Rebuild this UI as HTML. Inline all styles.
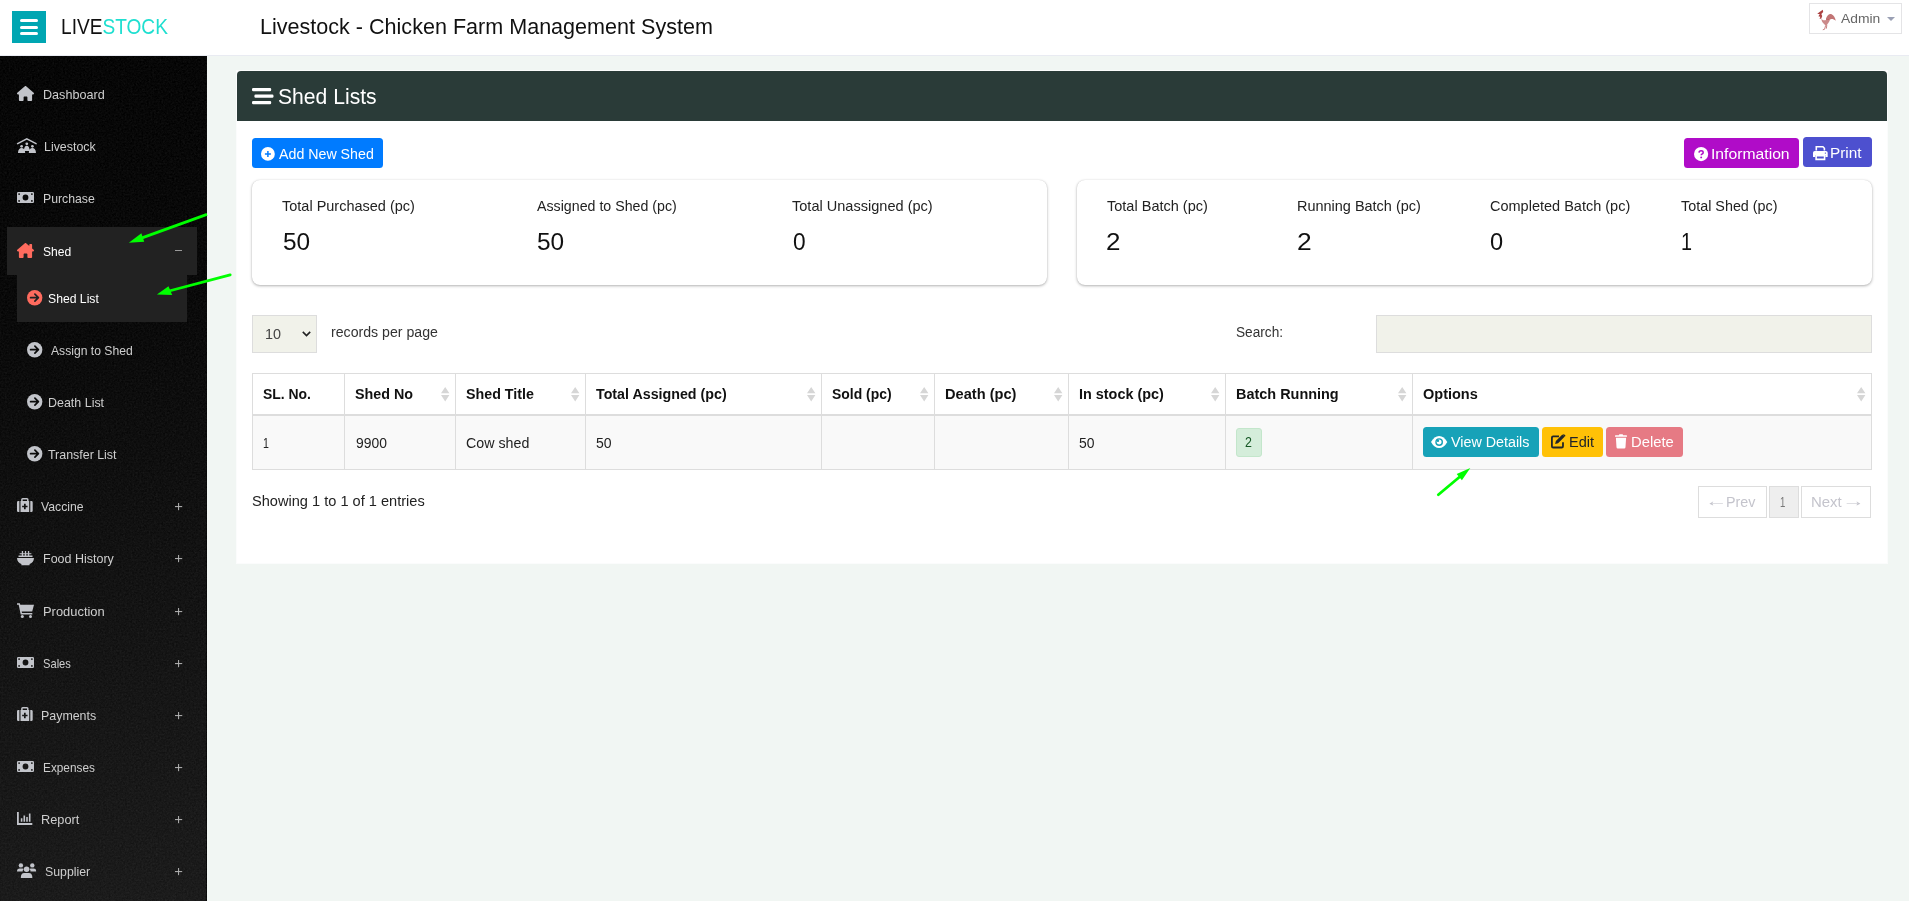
<!DOCTYPE html>
<html lang="en">
<head>
<meta charset="utf-8">
<title>Livestock - Chicken Farm Management System</title>
<style>
*{box-sizing:border-box;margin:0;padding:0}
html,body{width:1909px;height:901px;overflow:hidden}
body{position:relative;background:#f1f6f3;font-family:"Liberation Sans","DejaVu Sans",sans-serif;color:#222;font-size:14px}
.abs{position:absolute}
.t{position:absolute;white-space:nowrap;line-height:1;transform-origin:0 50%}
svg{display:block;position:absolute;overflow:visible}

/* header */
#hdr{left:0;top:0;width:1909px;height:55px;background:#fff}
#hdrline{left:0;top:55px;width:1909px;height:1px;background:#e9ebf2}
#burger{left:12px;top:11px;width:34px;height:32px;background:#00a6b2}
#burger i{position:absolute;left:8px;width:18px;height:3px;border-radius:1.5px;background:#fff}

/* sidebar */
#side{left:0;top:56px;width:207px;height:845px;background:linear-gradient(172deg,#000 0%,#030303 28%,#0d0d0d 62%,#161616 100%);border-right:1px solid #040404}
.mi{position:absolute;left:7px;width:190px;height:48px}
.smi{position:absolute;left:17px;width:170px;height:47px}
.on{background:#222}
.mt{color:#c8c8c8;font-size:13px}
.pm{color:#a5a5a5;font-size:14px}
.ic{fill:#c4c4c4}

/* panel */
#panel{left:237px;top:71px;width:1650px;height:492px;background:#fff;box-shadow:0 0 0 1px rgba(255,255,255,.7)}
#phead{left:237px;top:71px;width:1650px;height:50px;background:#2a3b38;border-radius:4px 4px 0 0}
.btn{position:absolute;border-radius:3.5px;height:30px}
.bt{font-size:14px;color:#fff}
.card{position:absolute;top:180px;width:795px;height:105px;background:#fff;border-radius:8px;box-shadow:0 1px 3px rgba(0,0,0,.30),0 0 1px rgba(0,0,0,.15)}
.lbl{font-size:15px;color:#222}
.val{font-size:24px;color:#111}
.inp{position:absolute;top:315px;height:38px;background:#f1f2ea;border:1px solid #ddd}

/* table */
.vl{position:absolute;width:1px;background:#ddd;top:373px;height:97px}
.hl{position:absolute;left:252px;width:1620px;background:#ddd}
.th{font-weight:bold;font-size:14px;color:#111}
.td{font-size:14px;color:#222}
.pg{position:absolute;top:486px;height:32px;border:1px solid #ddd;background:#fff}
.pgt{font-size:15px;color:#bbb}
</style>
</head>
<body>

<!-- ================= HEADER ================= -->
<div id="hdr" class="abs"></div>
<div id="hdrline" class="abs"></div>
<div id="burger" class="abs"><i style="top:8px"></i><i style="top:14.5px"></i><i style="top:21px"></i></div>

<!-- admin dropdown -->
<div class="abs" id="admin" style="left:1809px;top:3px;width:93px;height:31px;border:1px solid #e4e4e6;background:#fff"></div>
<svg id="rooster" style="left:1816px;top:9px" width="21" height="22" viewBox="0 0 21 22">
  <path d="M6.800 .8L3.200 3.200L1.200 5L3.800 5.100L2.400 7.300L4.300 7.700L3.600 10L5.300 9.600L6.200 7L5.300 5L7.200 3z" fill="#9c1f1f" opacity=".85"/>
  <path d="M10 9.600C11 6.500 13.500 4.300 15.600 5.300C17.700 6.400 19.300 9 19.800 11.800C17.800 10.200 16.200 9.700 14.700 10.200C13.200 10.700 12 11.200 10 11.100z" fill="#a83a3a" opacity=".7"/>
  <path d="M5 9.200C6 11.200 8 11.700 10 11.100L14.200 10.200C13.200 13.200 11.700 15.300 9.700 16.800C8.600 15.700 7 14.200 6 12.600z" fill="#a83a3a" opacity=".6"/>
  <path d="M9.600 16.600L8.600 20.200L6.800 20.800M10.800 15.800L10.400 19.600" fill="none" stroke="#a83a3a" stroke-width=".9" opacity=".7"/>
</svg>
<svg id="caret" style="left:1886.900px;top:17px" width="8" height="4" viewBox="0 0 8 4"><path d="M0 0h8L4 4z" fill="#9aa0b4"/></svg>

<!-- ================= SIDEBAR ================= -->
<div id="side" class="abs"></div>
<svg id="noise" style="left:0;top:56px" width="207" height="845" viewBox="0 0 207 845"><filter id="nz" x="0" y="0" width="100%" height="100%"><feTurbulence type="fractalNoise" baseFrequency="0.55" numOctaves="3" seed="7"/><feColorMatrix type="matrix" values="0 0 0 0 1  0 0 0 0 1  0 0 0 0 1  0.6 0.6 0.6 0 -0.62"/></filter><rect width="207" height="845" filter="url(#nz)" opacity=".09"/></svg>
<div class="mi on" style="top:227px"></div>
<div class="smi on" style="top:275px"></div>
<svg id="i_home" style="left:17px;top:85.8px" width="17" height="15.1" viewBox="0 0 576 512"><path d="M575.8 255.5c0 18-15 32.1-32 32.1h-32l.7 160.2c0 2.7-.2 5.4-.5 8.1V472c0 22.1-17.9 40-40 40H456c-1.1 0-2.2 0-3.3-.1c-1.4 .1-2.8 .1-4.2 .1H416 392c-22.1 0-40-17.9-40-40V448 384c0-17.7-14.3-32-32-32H256c-17.7 0-32 14.3-32 32v64 24c0 22.1-17.9 40-40 40H160 128.1c-1.5 0-3-.1-4.5-.2c-1.2 .1-2.4 .2-3.6 .2H104c-22.1 0-40-17.9-40-40V360c0-.9 0-1.9 .1-2.8V287.6H32c-18 0-32-14-32-32.1c0-9 3-17 10-24L266.4 8c7-7 15-8 22-8s15 2 21 7L564.8 231.5c8 7 12 15 11 24z" fill="#c2c4ca"/></svg>
<svg id="i_live" style="left:16.500px;top:138px" width="19.700" height="15.300" viewBox="0 0 19.700 15.300"><path d="M.6 5.600L9.800 .9l9.300 4.700" fill="none" stroke="#c2c4ca" stroke-width="1.500" stroke-linecap="round" stroke-linejoin="miter"/>
<circle cx="4.600" cy="8.300" r="1.350" fill="#c2c4ca"/><circle cx="9.800" cy="5.800" r="1.400" fill="#c2c4ca"/><circle cx="15.400" cy="8.300" r="1.350" fill="#c2c4ca"/>
<path d="M1 15C1 11.500 2.600 10 4.600 10C6.600 10 8.200 11.500 8.200 15zM6.900 13C6.900 9.500 8.200 7.700 9.800 7.700C11.400 7.700 12.700 9.500 12.700 13zM11.800 15C11.800 11.500 13.400 10 15.400 10C17.400 10 19 11.500 19 15z" fill="#c2c4ca"/></svg>
<svg id="i_purchase" style="left:17px;top:192px" width="17" height="11" viewBox="0 0 17 11"><path fill-rule="evenodd" fill="#c2c4ca" d="M1.200 0h14.600q1.200 0 1.200 1.200v8.600q0 1.200-1.200 1.200H1.200Q0 11 0 9.800V1.200Q0 0 1.200 0zM8.500 2.600a2.900 2.900 0 1 0 0 5.800a2.900 2.900 0 1 0 0-5.800zM2.100 1.200a.9 .9 0 1 0 0 1.800a.9 .9 0 1 0 0-1.800zM14.900 1.200a.9 .9 0 1 0 0 1.800a.9 .9 0 1 0 0-1.800zM2.100 8a.9 .9 0 1 0 0 1.800a.9 .9 0 1 0 0-1.800zM14.900 8a.9 .9 0 1 0 0 1.800a.9 .9 0 1 0 0-1.800z"/></svg>
<svg id="i_shed" style="left:17px;top:243px" width="17" height="15.1" viewBox="0 0 576 512"><path d="M543.8 287.6c17 0 32-14 32-32.1c1-9-3-17-11-24L512 185V64c0-17.7-14.3-32-32-32H448c-17.7 0-32 14.3-32 32v36.7L309.5 7c-6-5-14-7-21-7s-15 1-22 8L10 231.5c-7 7-10 15-10 24c0 18 14 32.1 32 32.1h32v69.7c-.1 .9-.1 1.8-.1 2.8V472c0 22.1 17.9 40 40 40h16c1.2 0 2.4-.1 3.6-.2c1.500 .1 3 .2 4.5 .2H160h24c22.1 0 40-17.9 40-40V448 384c0-17.7 14.300-32 32-32h64c17.700 0 32 14.300 32 32v64 24c0 22.1 17.900 40 40 40h24 32.500c1.400 0 2.800 0 4.200-.1c1.100 .1 2.200 .1 3.300 .1h16c22.100 0 40-17.900 40-40V455.800c.3-2.600 .5-5.300 .5-8.100l-.7-160.200h32z" fill="#ff6b5e"/></svg>
<svg id="i_s1" style="left:27.1px;top:289.6px" width="15.4" height="15.4" viewBox="0 0 15.4 15.4"><circle cx="7.7" cy="7.7" r="7.700" fill="#ff6b5e"/><path d="M3.6 7.7h7.200M7.9 4.2l3.500 3.500l-3.500 3.500" fill="none" stroke="#222" stroke-width="1.7" stroke-linecap="round" stroke-linejoin="round"/></svg>
<svg id="i_s2" style="left:27.1px;top:341.6px" width="15.4" height="15.4" viewBox="0 0 15.4 15.4"><circle cx="7.7" cy="7.7" r="7.700" fill="#c2c4ca"/><path d="M3.6 7.7h7.200M7.9 4.2l3.500 3.500l-3.500 3.500" fill="none" stroke="#0b0b0b" stroke-width="1.7" stroke-linecap="round" stroke-linejoin="round"/></svg>
<svg id="i_s3" style="left:27.1px;top:393.7px" width="15.4" height="15.4" viewBox="0 0 15.4 15.4"><circle cx="7.7" cy="7.7" r="7.700" fill="#c2c4ca"/><path d="M3.6 7.7h7.200M7.9 4.2l3.500 3.500l-3.500 3.500" fill="none" stroke="#0b0b0b" stroke-width="1.7" stroke-linecap="round" stroke-linejoin="round"/></svg>
<svg id="i_s4" style="left:27.1px;top:445.6px" width="15.4" height="15.4" viewBox="0 0 15.4 15.4"><circle cx="7.7" cy="7.7" r="7.700" fill="#c2c4ca"/><path d="M3.6 7.7h7.200M7.9 4.2l3.500 3.500l-3.500 3.500" fill="none" stroke="#0b0b0b" stroke-width="1.7" stroke-linecap="round" stroke-linejoin="round"/></svg>
<svg id="i_vaccine" style="left:16.7px;top:498px" width="15.7" height="14" viewBox="0 0 15.7 14"><path d="M4.900 3.200V1.600q0-.8.800-.8h4.300q.8 0 .8.800v1.600" fill="none" stroke="#c2c4ca" stroke-width="1.500"/>
<path fill-rule="evenodd" fill="#c2c4ca" d="M1.300 3h1.100v11H1.300Q0 14 0 12.700V4.300Q0 3 1.300 3zM3.500 3h8.700v11H3.500zM7 5.800v1.850H5.150v1.700H7V11.200h1.700V9.350h1.850v-1.700H8.700V5.800zM13.300 3h1.100q1.300 0 1.300 1.300v8.400q0 1.300-1.300 1.300h-1.100z"/></svg>
<svg id="i_food" style="left:17px;top:551px" width="17" height="14.2" viewBox="0 0 17 14.2"><path d="M0 7H17C17 10.300 14.800 12.400 12.600 13.100V14.200H4.400V13.100C2.200 12.400 0 10.300 0 7z" fill="#c2c4ca"/>
<path d="M1.500 4.400h14v1.500h-14zM4.800 0h1.300v6h-1.300zM7.850 0h1.300v6h-1.300zM10.900 0h1.300v6h-1.300zM2.600 2.200h11.800v1.100H2.600z" fill="#c2c4ca"/></svg>
<svg id="i_prod" style="left:17px;top:603px" width="17" height="15" viewBox="0 0 17 15"><path d="M0 .3h2.800l.5 1.500H17l-1.800 6.700H4.700l.3 1.500h10.300v1.500H3.700L1.700 1.800H0z" fill="#c2c4ca"/><circle cx="5.300" cy="13.500" r="1.500" fill="#c2c4ca"/><circle cx="13.500" cy="13.500" r="1.500" fill="#c2c4ca"/></svg>
<svg id="i_sales" style="left:17px;top:657px" width="17" height="11" viewBox="0 0 17 11"><path fill-rule="evenodd" fill="#c2c4ca" d="M1.200 0h14.600q1.200 0 1.200 1.200v8.600q0 1.200-1.200 1.200H1.200Q0 11 0 9.800V1.200Q0 0 1.200 0zM8.500 2.600a2.900 2.900 0 1 0 0 5.800a2.900 2.900 0 1 0 0-5.800zM2.100 1.200a.9 .9 0 1 0 0 1.800a.9 .9 0 1 0 0-1.800zM14.900 1.200a.9 .9 0 1 0 0 1.800a.9 .9 0 1 0 0-1.800zM2.100 8a.9 .9 0 1 0 0 1.800a.9 .9 0 1 0 0-1.800zM14.900 8a.9 .9 0 1 0 0 1.800a.9 .9 0 1 0 0-1.800z"/></svg>
<svg id="i_pay" style="left:16.7px;top:707px" width="15.7" height="14" viewBox="0 0 15.7 14"><path d="M4.900 3.200V1.600q0-.8.800-.8h4.300q.8 0 .8.800v1.600" fill="none" stroke="#c2c4ca" stroke-width="1.500"/>
<path fill-rule="evenodd" fill="#c2c4ca" d="M1.300 3h1.100v11H1.300Q0 14 0 12.700V4.300Q0 3 1.300 3zM3.500 3h8.700v11H3.500zM7 5.800v1.850H5.150v1.700H7V11.200h1.700V9.350h1.850v-1.700H8.700V5.800zM13.300 3h1.100q1.300 0 1.300 1.300v8.400q0 1.300-1.300 1.300h-1.100z"/></svg>
<svg id="i_exp" style="left:17px;top:761px" width="17" height="11" viewBox="0 0 17 11"><path fill-rule="evenodd" fill="#c2c4ca" d="M1.200 0h14.600q1.200 0 1.200 1.200v8.600q0 1.200-1.200 1.200H1.200Q0 11 0 9.800V1.200Q0 0 1.200 0zM8.500 2.600a2.900 2.900 0 1 0 0 5.800a2.900 2.900 0 1 0 0-5.800zM2.100 1.200a.9 .9 0 1 0 0 1.800a.9 .9 0 1 0 0-1.800zM14.900 1.200a.9 .9 0 1 0 0 1.800a.9 .9 0 1 0 0-1.800zM2.100 8a.9 .9 0 1 0 0 1.800a.9 .9 0 1 0 0-1.800zM14.900 8a.9 .9 0 1 0 0 1.800a.9 .9 0 1 0 0-1.800z"/></svg>
<svg id="i_report" style="left:16.7px;top:811.9px" width="15.3" height="12.9" viewBox="0 0 15.3 12.9"><path d="M0 0h1.800v11.100h13.500v1.800H0z" fill="#c2c4ca"/><path d="M3.800 6.200h1.600v3.600H3.800zM6.500 3.400h1.600v6.400H6.500zM9.200 5h1.600v4.800H9.200zM11.900 1.600h1.600v8.200h-1.600z" fill="#c2c4ca"/></svg>
<svg id="i_sup" style="left:17px;top:862.8px" width="19.2" height="15.1" viewBox="0 0 19.2 15.1"><circle cx="3.900" cy="2.400" r="2.200" fill="#c2c4ca"/><circle cx="15.300" cy="2.400" r="2.200" fill="#c2c4ca"/><circle cx="9.600" cy="6.200" r="2.800" fill="#c2c4ca"/>
<path d="M0 8.400Q0 5.600 2.600 5.600H5.600Q6.300 5.600 6.600 6Q5.500 7.200 5.700 8.400zM19.200 8.400Q19.200 5.600 16.600 5.600H13.600Q12.900 5.600 12.600 6Q13.700 7.200 13.500 8.400z" fill="#c2c4ca"/>
<path d="M3.800 15.100Q3.800 10 7.300 10h4.600Q15.400 10 15.400 15.100z" fill="#c2c4ca"/></svg>
<svg id="pl0" style="left:175px;top:503.0px" width="7.200" height="7.200" viewBox="0 0 7.200 7.200"><path d="M3.600 0v7.200M0 3.600h7.200" stroke="#b8b8b8" stroke-width="1" fill="none"/></svg>
<svg id="pl1" style="left:175px;top:555.4px" width="7.200" height="7.200" viewBox="0 0 7.200 7.200"><path d="M3.600 0v7.200M0 3.600h7.200" stroke="#b8b8b8" stroke-width="1" fill="none"/></svg>
<svg id="pl2" style="left:175px;top:608.1px" width="7.200" height="7.200" viewBox="0 0 7.200 7.200"><path d="M3.600 0v7.200M0 3.600h7.200" stroke="#b8b8b8" stroke-width="1" fill="none"/></svg>
<svg id="pl3" style="left:175px;top:660.4px" width="7.200" height="7.200" viewBox="0 0 7.200 7.200"><path d="M3.600 0v7.200M0 3.600h7.200" stroke="#b8b8b8" stroke-width="1" fill="none"/></svg>
<svg id="pl4" style="left:175px;top:712.2px" width="7.200" height="7.200" viewBox="0 0 7.200 7.200"><path d="M3.600 0v7.200M0 3.600h7.200" stroke="#b8b8b8" stroke-width="1" fill="none"/></svg>
<svg id="pl5" style="left:175px;top:764.1px" width="7.200" height="7.200" viewBox="0 0 7.200 7.200"><path d="M3.600 0v7.200M0 3.600h7.200" stroke="#b8b8b8" stroke-width="1" fill="none"/></svg>
<svg id="pl6" style="left:175px;top:815.8px" width="7.200" height="7.200" viewBox="0 0 7.200 7.200"><path d="M3.600 0v7.200M0 3.600h7.200" stroke="#b8b8b8" stroke-width="1" fill="none"/></svg>
<svg id="pl7" style="left:175px;top:868.0px" width="7.200" height="7.200" viewBox="0 0 7.200 7.200"><path d="M3.600 0v7.200M0 3.600h7.200" stroke="#b8b8b8" stroke-width="1" fill="none"/></svg>
<div class="abs" id="minus" style="left:175px;top:249.8px;width:7.200px;height:1.4px;background:#9a9a9a"></div>
<svg id="arrows" style="left:0;top:0" width="1909" height="901" viewBox="0 0 1909 901">
<path d="M207 214.400L142 237.900" stroke="#00ff00" stroke-width="2.800" fill="none"/><path d="M128.800 242.800L141.400 233.300L144.200 241.800z" fill="#00ff00"/>
<path d="M230.200 274.900L169 291" stroke="#00ff00" stroke-width="2.800" fill="none" stroke-linecap="round"/><path d="M156.900 294.500L168.500 286.300L172.200 295.100z" fill="#00ff00"/>
</svg>

<!-- ================= PANEL ================= -->
<div id="panel" class="abs"></div>
<div id="phead" class="abs"></div>
<svg id="i_stream" style="left:251.600px;top:87.900px" width="21.500" height="16.400" viewBox="0 0 21.500 16.400">
  <rect x="0" y="0" width="19.200" height="3.200" rx="1.200" fill="#fff"/>
  <rect x="2.400" y="6.500" width="19.100" height="3.200" rx="1.200" fill="#fff"/>
  <rect x="0" y="13.100" width="19.200" height="3.200" rx="1.200" fill="#fff"/>
</svg>

<!-- buttons row -->
<div class="btn" id="btn_add" style="left:252px;top:138px;width:131px;background:#007bff"></div>
<svg id="i_plus" style="left:261.100px;top:146.800px" width="13.800" height="13.800" viewBox="0 0 13.800 13.800">
  <circle cx="6.900" cy="6.900" r="6.900" fill="#fff"/><path d="M6.900 3.900v6M3.900 6.900h6" stroke="#007bff" stroke-width="1.500" fill="none"/>
</svg>
<div class="btn" id="btn_info" style="left:1684px;top:138px;width:115px;background:#b00cc8"></div>
<svg id="i_q" style="left:1693.700px;top:146.700px" width="14.200" height="14.200" viewBox="0 0 14.200 14.200">
  <circle cx="7.100" cy="7.100" r="7.100" fill="#fff"/>
  <path d="M5 5.600Q5.100 3.700 7.100 3.700Q9.200 3.700 9.200 5.400Q9.200 6.500 7.900 7.100Q7.200 7.500 7.200 8.300" stroke="#b00cc8" stroke-width="1.500" fill="none"/><circle cx="7.200" cy="10.400" r=".95" fill="#b00cc8"/>
</svg>
<div class="btn" id="btn_print" style="left:1803px;top:137px;width:69px;background:#4d50cf"></div>
<svg id="i_print" style="left:1813px;top:146px" width="14.700" height="14.200" viewBox="0 0 14.700 14.200">
  <path d="M3.300 4.600V.8h6.600l1.500 1.500v2.300" fill="none" stroke="#fff" stroke-width="1.600"/>
  <path d="M1.800 5h11.100q1.800 0 1.800 1.800v4.100h-2.300V9H2.300v1.900H0V6.800Q0 5 1.800 5z" fill="#fff"/>
  <path d="M3.100 9.800h8.500v3.600H3.100z" fill="none" stroke="#fff" stroke-width="1.600"/>
  <circle cx="12.400" cy="7.100" r=".7" fill="#4d50cf"/>
</svg>

<!-- stat cards -->
<div class="card" id="card1" style="left:252px"></div>
<div class="card" id="card2" style="left:1077px"></div>

<!-- length + search -->
<div class="inp" id="sel" style="left:252px;width:65px"></div>
<svg id="i_chev" style="left:301.800px;top:331px" width="9" height="6" viewBox="0 0 9 6"><path d="M.8 .9l3.700 3.700L8.200 .9" fill="none" stroke="#222" stroke-width="1.600"/></svg>
<div class="inp" id="srch" style="left:1376px;width:496px"></div>

<!-- ================= TABLE ================= -->
<div class="abs" id="rowbg" style="left:252px;top:416px;width:1620px;height:53px;background:#f9f9f9"></div>
<div class="hl" style="top:373px;height:1px"></div>
<div class="hl" style="top:414px;height:2px"></div>
<div class="hl" style="top:469px;height:1px"></div>
<div class="vl" style="left:252px"></div>
<div class="vl" style="left:344px"></div>
<div class="vl" style="left:455px"></div>
<div class="vl" style="left:585px"></div>
<div class="vl" style="left:821px"></div>
<div class="vl" style="left:934px"></div>
<div class="vl" style="left:1068px"></div>
<div class="vl" style="left:1225px"></div>
<div class="vl" style="left:1412px"></div>
<div class="vl" style="left:1871px"></div>
<svg id="so0" style="left:441.2px;top:386.600px" width="8.400" height="14.400" viewBox="0 0 8.400 14.400"><path d="M4.200 0L8.400 6.300H0zM0 8.100h8.400L4.200 14.400z" fill="#d6d6d6"/></svg>
<svg id="so1" style="left:571.0px;top:386.600px" width="8.400" height="14.400" viewBox="0 0 8.400 14.400"><path d="M4.200 0L8.400 6.300H0zM0 8.100h8.400L4.200 14.400z" fill="#d6d6d6"/></svg>
<svg id="so2" style="left:807.1px;top:386.600px" width="8.400" height="14.400" viewBox="0 0 8.400 14.400"><path d="M4.200 0L8.400 6.300H0zM0 8.100h8.400L4.200 14.400z" fill="#d6d6d6"/></svg>
<svg id="so3" style="left:920.2px;top:386.600px" width="8.400" height="14.400" viewBox="0 0 8.400 14.400"><path d="M4.200 0L8.400 6.300H0zM0 8.100h8.400L4.200 14.400z" fill="#d6d6d6"/></svg>
<svg id="so4" style="left:1054.3px;top:386.600px" width="8.400" height="14.400" viewBox="0 0 8.400 14.400"><path d="M4.200 0L8.400 6.300H0zM0 8.100h8.400L4.200 14.400z" fill="#d6d6d6"/></svg>
<svg id="so5" style="left:1211.0px;top:386.600px" width="8.400" height="14.400" viewBox="0 0 8.400 14.400"><path d="M4.200 0L8.400 6.300H0zM0 8.100h8.400L4.200 14.400z" fill="#d6d6d6"/></svg>
<svg id="so6" style="left:1398.2px;top:386.600px" width="8.400" height="14.400" viewBox="0 0 8.400 14.400"><path d="M4.200 0L8.400 6.300H0zM0 8.100h8.400L4.200 14.400z" fill="#d6d6d6"/></svg>
<svg id="so7" style="left:1857.2px;top:386.600px" width="8.400" height="14.400" viewBox="0 0 8.400 14.400"><path d="M4.200 0L8.400 6.300H0zM0 8.100h8.400L4.200 14.400z" fill="#d6d6d6"/></svg>
<div class="abs" id="badge" style="left:1236px;top:427.500px;width:26px;height:29.500px;background:#d4edda;border:1px solid #c3e6cb;border-radius:3px"></div>
<div class="btn" id="btn_view" style="left:1423px;top:427px;width:116px;background:#17a2b8"></div>
<svg id="i_eye" style="left:1431.400px;top:436.200px" width="16.300" height="12.100" viewBox="0 0 16.300 12.100">
  <path d="M0 6.050Q3.300 0 8.150 0Q13 0 16.300 6.050Q13 12.100 8.150 12.100Q3.300 12.100 0 6.050z" fill="#fff"/>
  <circle cx="8.150" cy="6.050" r="3.900" fill="#17a2b8"/><circle cx="8.150" cy="6.050" r="2.500" fill="#fff"/><circle cx="6.900" cy="4.800" r="1.300" fill="#17a2b8"/>
</svg>
<div class="btn" id="btn_edit" style="left:1542px;top:427px;width:61px;background:#ffc107"></div>
<svg id="i_edit" style="left:1551.400px;top:434.400px" width="14.200" height="14.400" viewBox="0 0 14.200 14.400">
  <path d="M8 2.400H2.200Q.9 2.400 .9 3.700v8.500q0 1.300 1.300 1.300h8.500q1.300 0 1.300-1.300V8.200" fill="none" stroke="#212529" stroke-width="1.800"/>
  <path d="M4.900 7.100L11.400 .6l2.200 2.200-6.500 6.500-3 .8z" fill="#212529"/><path d="M12.300 .4q.5-.5 1 0l.9.900q.5.500 0 1l-.5.500-1.900-1.900z" fill="#212529"/>
</svg>
<div class="btn" id="btn_del" style="left:1606px;top:427px;width:77px;background:#e67a84"></div>
<svg id="i_trash" style="left:1615.300px;top:434.400px" width="12" height="14.400" viewBox="0 0 12 14.400">
  <path d="M.5 1.200h3.300L4.400 .2h3.200l.6 1h3.300q.5 0 .5.500v1.100H0V1.700q0-.5.500-.5zM.9 3.800h10.200l-.6 9.400q-.1 1.200-1.300 1.200H2.800q-1.200 0-1.300-1.200z" fill="#fff"/>
</svg>
<div class="pg" id="pg_prev" style="left:1698px;width:69px"></div>
<div class="pg" id="pg_1" style="left:1769px;width:30px;background:#eee"></div>
<div class="pg" id="pg_next" style="left:1801px;width:70px"></div>
<svg id="arrow3" style="left:1430px;top:460px" width="50" height="45" viewBox="1430 460 50 45">
<path d="M1438.300 494.700L1459.500 477" stroke="#00ff00" stroke-width="2.800" fill="none" stroke-linecap="round"/><path d="M1470.300 467.900L1456.700 473.900L1461.900 480.300z" fill="#00ff00"/>
</svg>

<!-- ================= TEXT ================= -->
<div class="t" id="logo" style="left:60.71px;top:17.00px;font-size:21.5px;color:#111;transform:scaleX(0.8887)">LIVE<span style="color:#1fdfd0">STOCK</span></div>
<div class="t" id="title" style="left:260.32px;top:16.00px;font-size:22px;color:#111;transform:scaleX(0.9799)">Livestock - Chicken Farm Management System</div>
<div class="t" id="admintxt" style="left:1841.40px;top:12.00px;font-size:13.5px;color:#666;transform:scaleX(1.0276)">Admin</div>
<div class="t" id="ptitle" style="left:277.84px;top:86.00px;font-size:22px;color:#fff;transform:scaleX(0.9604)">Shed Lists</div>
<div class="t" id="b_add" style="left:279.30px;top:147.00px;font-size:14px;color:#fff;transform:scaleX(1.0150)">Add New Shed</div>
<div class="t" id="b_info" style="left:1710.78px;top:147.00px;font-size:14px;color:#fff;transform:scaleX(1.1224)">Information</div>
<div class="t" id="b_print" style="left:1830.00px;top:146.00px;font-size:14px;color:#fff;transform:scaleX(1.0969)">Print</div>
<div class="t" id="l1" style="left:282.20px;top:199.00px;font-size:14.3px;color:#222;transform:scaleX(1.0134)">Total Purchased (pc)</div>
<div class="t" id="l2" style="left:537.20px;top:199.00px;font-size:14.3px;color:#222;transform:scaleX(0.9935)">Assigned to Shed (pc)</div>
<div class="t" id="l3" style="left:792.00px;top:199.00px;font-size:14.3px;color:#222;transform:scaleX(1.0174)">Total Unassigned (pc)</div>
<div class="t" id="l4" style="left:1107.30px;top:199.00px;font-size:14.3px;color:#222;transform:scaleX(1.0156)">Total Batch (pc)</div>
<div class="t" id="l5" style="left:1297.39px;top:199.00px;font-size:14.3px;color:#222;transform:scaleX(1.0114)">Running Batch (pc)</div>
<div class="t" id="l6" style="left:1489.70px;top:199.00px;font-size:14.3px;color:#222;transform:scaleX(1.0145)">Completed Batch (pc)</div>
<div class="t" id="l7" style="left:1681.00px;top:199.00px;font-size:14.3px;color:#222;transform:scaleX(1.0043)">Total Shed (pc)</div>
<div class="t" id="v1" style="left:282.50px;top:230.00px;font-size:24px;color:#111;transform:scaleX(1.0172)">50</div>
<div class="t" id="v2" style="left:537.40px;top:230.00px;font-size:24px;color:#111;transform:scaleX(1.0172)">50</div>
<div class="t" id="v3" style="left:792.90px;top:230.00px;font-size:24px;color:#111;transform:scaleX(0.9462)">0</div>
<div class="t" id="v4" style="left:1106.12px;top:230.00px;font-size:24px;color:#111;transform:scaleX(1.0833)">2</div>
<div class="t" id="v5" style="left:1297.30px;top:230.00px;font-size:24px;color:#111;transform:scaleX(1.1000)">2</div>
<div class="t" id="v6" style="left:1489.90px;top:230.00px;font-size:24px;color:#111;transform:scaleX(0.9846)">0</div>
<div class="t" id="v7" style="left:1681.47px;top:230.00px;font-size:24px;color:#111;transform:scaleX(0.8250)">1</div>
<div class="t" id="sel10" style="left:264.97px;top:327.00px;font-size:14px;color:#444;transform:scaleX(1.0280)">10</div>
<div class="t" id="rpp" style="left:330.90px;top:325.00px;font-size:14px;color:#333;transform:scaleX(1.0099)">records per page</div>
<div class="t" id="search" style="left:1236.00px;top:325.00px;font-size:14px;color:#333;transform:scaleX(0.9755)">Search:</div>
<div class="t" id="h1" style="left:262.90px;top:387.00px;font-size:14px;color:#111;transform:scaleX(0.9951);font-weight:bold">SL. No.</div>
<div class="t" id="h2" style="left:355.40px;top:387.00px;font-size:14px;color:#111;transform:scaleX(1.0226);font-weight:bold">Shed No</div>
<div class="t" id="h3" style="left:466.10px;top:387.00px;font-size:14px;color:#111;transform:scaleX(1.0186);font-weight:bold">Shed Title</div>
<div class="t" id="h4" style="left:596.20px;top:387.00px;font-size:14px;color:#111;transform:scaleX(1.0180);font-weight:bold">Total Assigned (pc)</div>
<div class="t" id="h5" style="left:832.00px;top:387.00px;font-size:14px;color:#111;transform:scaleX(0.9946);font-weight:bold">Sold (pc)</div>
<div class="t" id="h6" style="left:945.40px;top:387.00px;font-size:14px;color:#111;transform:scaleX(1.0430);font-weight:bold">Death (pc)</div>
<div class="t" id="h7" style="left:1079.30px;top:387.00px;font-size:14px;color:#111;transform:scaleX(1.0282);font-weight:bold">In stock (pc)</div>
<div class="t" id="h8" style="left:1235.90px;top:387.00px;font-size:14px;color:#111;transform:scaleX(1.0314);font-weight:bold">Batch Running</div>
<div class="t" id="h9" style="left:1422.80px;top:387.00px;font-size:14px;color:#111;transform:scaleX(1.0358);font-weight:bold">Options</div>
<div class="t" id="c1" style="left:263.14px;top:436.00px;font-size:14px;color:#222;transform:scaleX(0.7571)">1</div>
<div class="t" id="c2" style="left:355.80px;top:436.00px;font-size:14px;color:#222;transform:scaleX(0.9918)">9900</div>
<div class="t" id="c3" style="left:466.10px;top:436.00px;font-size:14px;color:#222;transform:scaleX(1.0168)">Cow shed</div>
<div class="t" id="c4" style="left:596.20px;top:436.00px;font-size:14px;color:#222;transform:scaleX(1.0009)">50</div>
<div class="t" id="c7" style="left:1079.30px;top:436.00px;font-size:14px;color:#222;transform:scaleX(0.9945)">50</div>
<div class="t" id="c8" style="left:1244.90px;top:435.00px;font-size:14px;color:#155724;transform:scaleX(0.8875)">2</div>
<div class="t" id="b_view" style="left:1451.00px;top:435.00px;font-size:14px;color:#fff;transform:scaleX(1.0212)">View Details</div>
<div class="t" id="b_edit" style="left:1568.66px;top:435.00px;font-size:14px;color:#212529;transform:scaleX(1.0373)">Edit</div>
<div class="t" id="b_del" style="left:1630.74px;top:435.00px;font-size:14px;color:#fff;transform:scaleX(1.0559)">Delete</div>
<div class="t" id="info" style="left:252.20px;top:494.00px;font-size:14.3px;color:#222;transform:scaleX(1.0205)">Showing 1 to 1 of 1 entries</div>
<div class="t" id="p_pa" style="left:1704.60px;top:493.40px;font-size:15px;color:#c4c4cc;transform:scaleX(1.5000)">←</div>
<div class="t" id="p_prev" style="left:1726.28px;top:495.00px;font-size:14px;color:#c4c4cc;transform:scaleX(1.0221)">Prev</div>
<div class="t" id="p_1" style="left:1780.01px;top:495.00px;font-size:14px;color:#777;transform:scaleX(0.6857)">1</div>
<div class="t" id="p_next" style="left:1811.33px;top:495.00px;font-size:14px;color:#c4c4cc;transform:scaleX(1.0682)">Next</div>
<div class="t" id="p_na" style="left:1841.63px;top:493.40px;font-size:15px;color:#c4c4cc;transform:scaleX(1.5222)">→</div>
<div class="t" id="m1" style="left:42.93px;top:88.00px;font-size:13px;color:#cecece;transform:scaleX(0.9701)">Dashboard</div>
<div class="t" id="m2" style="left:44.05px;top:140.00px;font-size:13px;color:#cecece;transform:scaleX(0.9536)">Livestock</div>
<div class="t" id="m3" style="left:42.96px;top:192.00px;font-size:13px;color:#cecece;transform:scaleX(0.9424)">Purchase</div>
<div class="t" id="m4" style="left:43.00px;top:245.00px;font-size:13px;color:#fff;transform:scaleX(0.9293)">Shed</div>
<div class="t" id="s1" style="left:47.80px;top:292.00px;font-size:13px;color:#fff;transform:scaleX(0.9379)">Shed List</div>
<div class="t" id="s2" style="left:50.90px;top:344.00px;font-size:13px;color:#cecece;transform:scaleX(0.9345)">Assign to Shed</div>
<div class="t" id="s3" style="left:47.94px;top:396.00px;font-size:13px;color:#cecece;transform:scaleX(0.9582)">Death List</div>
<div class="t" id="s4" style="left:48.40px;top:448.00px;font-size:13px;color:#cecece;transform:scaleX(0.9550)">Transfer List</div>
<div class="t" id="m5" style="left:40.90px;top:500.00px;font-size:13px;color:#cecece;transform:scaleX(0.9389)">Vaccine</div>
<div class="t" id="m6" style="left:42.94px;top:552.00px;font-size:13px;color:#cecece;transform:scaleX(0.9605)">Food History</div>
<div class="t" id="m7" style="left:42.91px;top:605.00px;font-size:13px;color:#cecece;transform:scaleX(0.9931)">Production</div>
<div class="t" id="m8" style="left:43.40px;top:657.00px;font-size:13px;color:#cecece;transform:scaleX(0.8571)">Sales</div>
<div class="t" id="m9" style="left:40.55px;top:709.00px;font-size:13px;color:#cecece;transform:scaleX(0.9546)">Payments</div>
<div class="t" id="m10" style="left:42.99px;top:761.00px;font-size:13px;color:#cecece;transform:scaleX(0.9083)">Expenses</div>
<div class="t" id="m11" style="left:40.52px;top:813.00px;font-size:13px;color:#cecece;transform:scaleX(0.9816)">Report</div>
<div class="t" id="m12" style="left:45.00px;top:865.00px;font-size:13px;color:#cecece;transform:scaleX(0.9469)">Supplier</div>

</body>
</html>
